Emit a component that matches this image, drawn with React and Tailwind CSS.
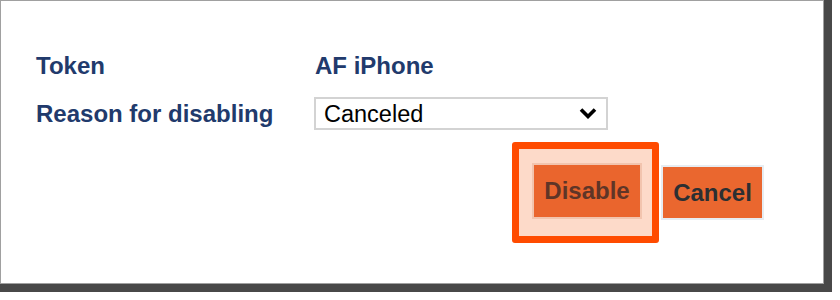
export default function App() {
  return (
    <div className="w-[840px] h-[300px] bg-white" style={{ fontFamily: '"Liberation Sans", Arial, sans-serif' }}>
      <div className="w-[832px] h-[292px] bg-[#484848] pr-2 pb-2">
        <div className="w-[824px] h-[284px] bg-white border border-[#a0a0a0] pt-[51px] pl-[35px]">
          {/* FORM ROWS */}
          <div className="grid grid-cols-[278px_1fr] gap-y-[17px] items-center text-[24px] leading-[28px] font-bold text-[#213a6c]">
            <div>Token</div>
            <div className="pl-px">AF iPhone</div>

            <div>Reason for disabling</div>
            <div className="relative w-[294px]">
              <select
                defaultValue="Canceled"
                className="appearance-none w-[294px] h-[33px] border-2 border-[#d3d3d3] bg-white pl-2 text-[23.5px] font-normal text-black outline-none"
                style={{ fontFamily: '"Liberation Sans", Arial, sans-serif' }}
              >
                <option>Canceled</option>
                <option>Lost</option>
                <option>Stolen</option>
              </select>
              <svg
                className="absolute right-[11px] top-[10px] pointer-events-none"
                width="18"
                height="12"
                viewBox="0 0 18 12"
              >
                <path d="M2 2.5 L9 9.5 L16 2.5" fill="none" stroke="#000" strokeWidth="3.6" />
              </svg>
            </div>
          </div>

          {/* ACTIONS */}
          <div className="flex items-center pl-[476px] mt-[12px]">
            <div className="border-[7px] border-[#ff4b00] bg-[#fddac9] rounded-[3px] pt-[14px] pb-[17px] pl-[13px] pr-[10px]">
              <button className="w-[110px] h-[56px] border-2 border-[#f2c4ae] bg-[#ea652d] text-[24px] font-bold text-[#5f3527]">
                Disable
              </button>
            </div>
            <button className="ml-[2px] w-[103px] h-[55px] border-2 border-[#e7edf2] bg-[#ea672f] text-[24px] font-bold text-[#2c2f32]">
              Cancel
            </button>
          </div>
        </div>
      </div>
    </div>
  );
}
